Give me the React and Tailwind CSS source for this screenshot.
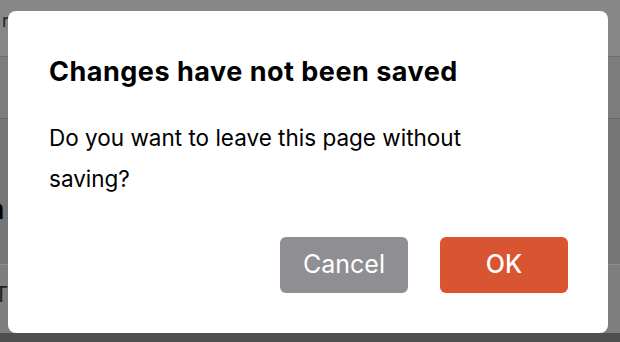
export default function App() {
  return (
    <div
      className="relative w-[620px] h-[342px] overflow-hidden bg-[#7b7b7b]"
      style={{ fontFamily: 'Inter, "Liberation Sans", sans-serif' }}
    >
      {/* dimmed page behind the modal */}
      <div className="flex flex-col h-full">
        <div className="h-[57px] shrink-0 bg-[#878787] border-b border-[#6f6f6f] pt-[12px] pl-[2px] text-[#222] text-[18px] leading-none">r</div>
        <div className="h-[62px] shrink-0 bg-[#7d7d7d] border-b border-[#6a6a6a]" />
        <div className="h-[146px] shrink-0 bg-[#767676] border-b border-[#8c8c8c] pt-[76px] text-black font-bold text-[28px] leading-none">
          <span className="-ml-[12px]">a</span>
        </div>
        <div className="flex-1 bg-[#7e7e7e] pt-[18px] text-[#222] text-[22px] leading-none">
          <span className="-ml-[6px]">T</span>
        </div>
        <div className="h-[9px] shrink-0 bg-[#4f4f4f]" />
      </div>

      {/* modal */}
      <div className="absolute left-[8px] top-[11px] w-[600px] h-[322px] bg-white rounded-[8px] flex flex-col pl-[41px] pr-[40px]">
        <h2 className="mt-[45px] text-[27px] leading-[32px] font-bold text-black tracking-[0.5px]">
          Changes have not been saved
        </h2>
        <p className="mt-[29px] w-[450px] text-[22.5px] leading-[41px] text-black">
          Do you want to leave this page without saving?
        </p>
        <div className="mt-auto mb-[40px] flex justify-end gap-[32px]">
          <button className="w-[128px] h-[56px] rounded-[6px] bg-[#8e8e93] text-white text-[25px]">
            Cancel
          </button>
          <button className="w-[128px] h-[56px] rounded-[6px] bg-[#d95532] text-white text-[25px] font-medium">
            OK
          </button>
        </div>
      </div>
    </div>
  );
}
